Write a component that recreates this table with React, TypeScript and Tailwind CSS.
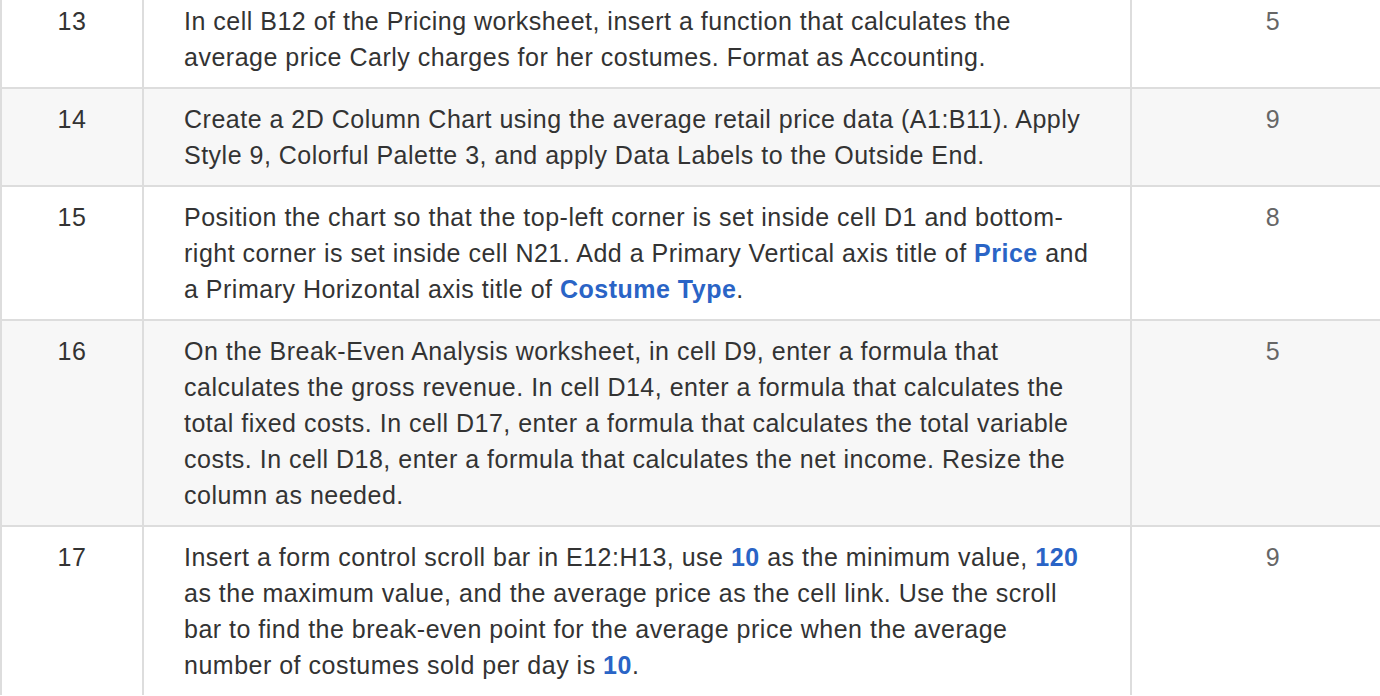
import React from 'react';

type Row = {
  num: number;
  points: number;
  text: React.ReactNode;
};

const B = ({ children }: { children: React.ReactNode }) => (
  <span className="font-bold text-[#2a64c6]">{children}</span>
);

const rows: Row[] = [
  {
    num: 13,
    points: 5,
    text: (
      <>
        In cell B12 of the Pricing worksheet, insert a function that calculates the average price
        Carly charges for her costumes. Format as Accounting.
      </>
    ),
  },
  {
    num: 14,
    points: 9,
    text: (
      <>
        Create a 2D Column Chart using the average retail price data (A1:B11). Apply Style 9,
        Colorful Palette 3, and apply Data Labels to the Outside End.
      </>
    ),
  },
  {
    num: 15,
    points: 8,
    text: (
      <>
        Position the chart so that the top-left corner is set inside cell D1 and bottom-right corner
        is set inside cell N21. Add a Primary Vertical axis title of <B>Price</B> and a Primary
        Horizontal axis title of <B>Costume Type</B>.
      </>
    ),
  },
  {
    num: 16,
    points: 5,
    text: (
      <>
        On the Break-Even Analysis worksheet, in cell D9, enter a formula that calculates the gross
        revenue. In cell D14, enter a formula that calculates the total fixed costs. In cell D17,
        enter a formula that calculates the total variable costs. In cell D18, enter a formula that
        calculates the net income. Resize the column as needed.
      </>
    ),
  },
  {
    num: 17,
    points: 9,
    text: (
      <>
        Insert a form control scroll bar in E12:H13, use <B>10</B> as the minimum value, <B>120</B>{' '}
        as the maximum value, and the average price as the cell link. Use the scroll bar to find the
        break-even point for the average price when the average number of costumes sold per day is{' '}
        <B>10</B>.
      </>
    ),
  },
];

export default function App() {
  return (
    <div className="h-[696px] w-full overflow-hidden bg-white font-['Liberation_Sans',Arial,sans-serif] text-[25px] leading-[36px] tracking-[0.5px] text-[#333]">
      <div className="-mt-[11px] w-[1414px]">
        {rows.map((row, i) => (
          <div
            key={row.num}
            className={`flex border-t-2 border-[#ddd] ${i % 2 === 1 ? 'bg-[#f7f7f7]' : 'bg-white'}`}
          >
            {/* 번호 */}
            <div className="w-[144px] shrink-0 border-x-2 border-[#ddd] py-3 text-center">
              {row.num}
            </div>
            {/* 설명 */}
            <div className="w-[988px] shrink-0 border-r-2 border-[#ddd] py-3 pl-10 pr-[38px]">
              {row.text}
            </div>
            {/* 점수 */}
            <div className="flex-1 py-3 text-center text-[#666]">{row.points}</div>
          </div>
        ))}
      </div>
    </div>
  );
}
